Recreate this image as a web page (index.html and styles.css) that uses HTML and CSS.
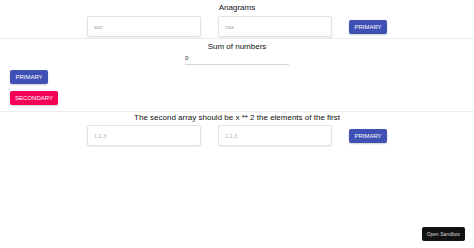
FILE: index.html
```html
<!DOCTYPE html>
<html lang="en">
<head>
  <meta charset="UTF-8">
  <title>Exercises</title>
  <link rel="stylesheet" href="styles.css">
</head>
<body>
  <div class="section">
    <div class="section-title">Anagrams</div>
    <div class="row">
      <input class="text-box" type="text" placeholder="aaz">
      <input class="text-box" type="text" placeholder="zaa">
      <button class="btn btn-primary">Primary</button>
    </div>
  </div>

  <div class="section sum-section">
    <div class="section-title">Sum of numbers</div>
    <div class="row">
      <input class="line-box" type="text" value="0">
    </div>
    <div class="stack">
      <button class="btn btn-primary">Primary</button>
      <button class="btn btn-secondary">Secondary</button>
    </div>
  </div>

  <div class="section square-section">
    <div class="section-title">The second array should be x ** 2 the elements of the first</div>
    <div class="row">
      <input class="text-box" type="text" placeholder="1,2,3">
      <input class="text-box" type="text" placeholder="1,2,3">
      <button class="btn btn-primary">Primary</button>
    </div>
  </div>

  <a class="sandbox-link" href="#">Open Sandbox</a>
</body>
</html>
```

FILE: styles.css
```css
body {
  margin: 0;
  font-family: "Liberation Sans", Arial, sans-serif;
  background: #fff;
  color: #111;
}
.section {
  border-bottom: 1px solid #ececec;
  padding-top: 2px;
}
.square-section {
  border-bottom: none;
  padding-top: 0;
}
.section-title {
  text-align: center;
  font-size: 8px;
  line-height: 11px;
  height: 11px;
}
.row {
  display: flex;
  justify-content: center;
  align-items: center;
  gap: 17px;
  padding: 3px 0 1px;
}
.square-section .row {
  padding-top: 2px;
}
.text-box {
  width: 114px;
  height: 21px;
  box-sizing: border-box;
  border: 1px solid #e2e2e2;
  border-radius: 2px;
  box-shadow: 0 1px 2px rgba(0, 0, 0, 0.08);
  padding: 0 6px;
  font-family: inherit;
  font-size: 5.5px;
  outline: none;
}
.text-box::placeholder {
  color: #b0b0b0;
}
.btn {
  height: 14px;
  border: none;
  border-radius: 2px;
  padding: 0 5px;
  font-family: inherit;
  font-size: 6px;
  font-weight: 500;
  text-transform: uppercase;
  color: #fff;
  box-shadow: 0 1px 2px rgba(0, 0, 0, 0.2);
}
.btn-primary {
  background: #3f51b5;
  width: 38px;
}
.btn-secondary {
  background: #f50057;
  width: 48px;
}
.line-box {
  width: 104px;
  height: 13px;
  box-sizing: border-box;
  border: none;
  border-bottom: 1px solid #d6d6d6;
  padding: 0;
  font-family: inherit;
  font-size: 6px;
  color: #222;
  outline: none;
}
.sum-section .row {
  padding-top: 0;
}
.stack {
  display: flex;
  flex-direction: column;
  align-items: flex-start;
  gap: 7px;
  padding: 4px 10px 6px;
}
.sandbox-link {
  position: fixed;
  right: 9px;
  bottom: 7px;
  background: #111;
  color: #ddd;
  font-size: 5px;
  line-height: 14px;
  padding: 0 5px;
  border-radius: 2px;
  text-decoration: none;
}
```
